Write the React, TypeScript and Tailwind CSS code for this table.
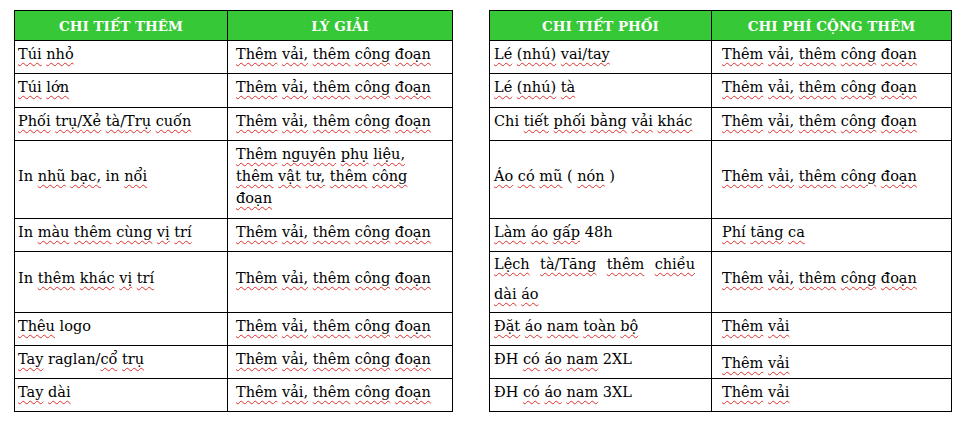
import React from "react";

type Cell = {
  text: string;
  align?: "top" | "center" | "bottom";
  justify?: boolean;
};

type Row = { left: Cell; right: Cell };

// "^" before a word = no spell-check squiggle, "|" = line break, "+" = join without space
function Words({ text }: { text: string }) {
  const lines = text.split("|");
  return (
    <>
      {lines.map((line, li) => (
        <React.Fragment key={li}>
          {li > 0 && <br />}
          {line.split(" ").map((chunk, i) => (
            <React.Fragment key={i}>
              {i > 0 && " "}
              {chunk.split("+").map((w, j) => {
                const plain = w.startsWith("^");
                const word = plain ? w.slice(1) : w;
                return plain || word === "(" || word === ")" ? (
                  <span key={j}>{word}</span>
                ) : (
                  <span
                    key={j}
                    className="underline decoration-wavy decoration-[#e0302c] decoration-1 underline-offset-[3px]"
                  >
                    {word}
                  </span>
                );
              })}
            </React.Fragment>
          ))}
        </React.Fragment>
      ))}
    </>
  );
}

function TableCell({ cell, pl }: { cell: Cell; pl: string }) {
  const pos =
    cell.align === "center"
      ? "justify-center pb-[10px] pt-[2px]"
      : cell.align === "bottom"
        ? "justify-end pb-[4px]"
        : "justify-start pt-[2px]";
  if (cell.justify) {
    const [first, second] = cell.text.split("|");
    return (
      <div className={`border-b border-r border-black pr-[16px] leading-[30px] ${pl}`}>
        <div className="-mt-[3px] text-justify [text-align-last:justify]">
          <Words text={first} />
        </div>
        <div>
          <Words text={second} />
        </div>
      </div>
    );
  }
  return (
    <div className={`flex flex-col border-b border-r border-black pr-[6px] ${pl} ${pos}`}>
      <div>
        <Words text={cell.text} />
      </div>
    </div>
  );
}

function DetailTable({
  heads,
  cols,
  pads,
  rows
}: {
  heads: [string, string];
  cols: string;
  pads: [string, string];
  rows: Row[];
}) {
  return (
    <div className={`grid ${cols} border-l border-t border-black`}>
      {heads.map((h) => (
        <div
          key={h}
          className="flex h-[30px] items-center justify-center border-b border-r border-black bg-[#37c837] text-[13.5px] font-bold text-white"
        >
          {h}
        </div>
      ))}
      {rows.map((r, i) => (
        <React.Fragment key={i}>
          <TableCell cell={r.left} pl={pads[0]} />
          <TableCell cell={r.right} pl={pads[1]} />
        </React.Fragment>
      ))}
    </div>
  );
}

const both = "Thêm vải, thêm công đoạn";

const leftRows: Row[] = [
  { left: { text: "Túi nhỏ" }, right: { text: both } },
  { left: { text: "Túi lớn" }, right: { text: both } },
  { left: { text: "Phối trụ/+Xẻ tà/+Trụ cuốn" }, right: { text: both } },
  {
    left: { text: "^In nhũ bạc, ^in nổi", align: "center" },
    right: { text: "Thêm nguyên phụ liệu,|thêm vật tư, thêm công|đoạn" }
  },
  { left: { text: "^In màu thêm cùng vị trí" }, right: { text: both } },
  {
    left: { text: "^In thêm khác vị trí", align: "center" },
    right: { text: both, align: "center" }
  },
  { left: { text: "Thêu ^logo" }, right: { text: both } },
  { left: { text: "Tay ^raglan/+cổ trụ" }, right: { text: both } },
  { left: { text: "Tay dài" }, right: { text: both } }
];

const rightRows: Row[] = [
  { left: { text: "Lé (nhú) vai/tay" }, right: { text: both } },
  { left: { text: "Lé (nhú) tà" }, right: { text: both } },
  { left: { text: "^Chi tiết phối bằng vải khác" }, right: { text: both } },
  {
    left: { text: "Áo có mũ ( nón )", align: "center" },
    right: { text: both, align: "center" }
  },
  { left: { text: "Làm áo gấp ^48h" }, right: { text: "Phí tăng ca" } },
  {
    left: { text: "Lệch tà/Tăng thêm chiều|dài áo", justify: true },
    right: { text: both, align: "center" }
  },
  { left: { text: "Đặt áo nam toàn bộ" }, right: { text: "Thêm vải" } },
  { left: { text: "^ĐH có áo nam ^2XL" }, right: { text: "Thêm vải", align: "bottom" } },
  { left: { text: "^ĐH có áo nam ^3XL" }, right: { text: "Thêm vải" } }
];

export default function App() {
  return (
    <div className="h-[431px] w-[964px] bg-white font-['DejaVu_Serif',serif] text-[14.5px] leading-[22px] text-black">
      <div className="flex gap-[36px] pl-[14px] pt-[10px]">
        <DetailTable
          heads={["CHI TIẾT THÊM", "LÝ GIẢI"]}
          cols="grid-cols-[213px_225px] grid-rows-[30px_33px_34px_33px_78px_33px_61px_33px_33px_33px]"
          pads={["pl-[3px]", "pl-[8px]"]}
          rows={leftRows}
        />
        <DetailTable
          heads={["CHI TIẾT PHỐI", "CHI PHÍ CỘNG THÊM"]}
          cols="grid-cols-[222px_240px] grid-rows-[30px_33px_34px_33px_78px_33px_61px_33px_33px_33px]"
          pads={["pl-[4px]", "pl-[10px]"]}
          rows={rightRows}
        />
      </div>
    </div>
  );
}
